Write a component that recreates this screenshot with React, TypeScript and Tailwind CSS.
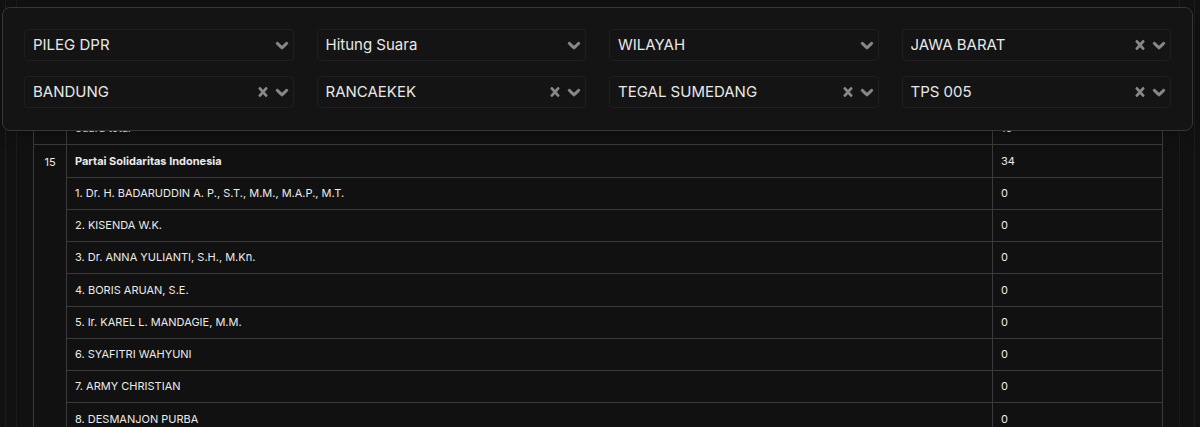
import React from 'react';

type Filter = { label: string; clearable: boolean };

const filters: Filter[] = [
  { label: 'PILEG DPR', clearable: false },
  { label: 'Hitung Suara', clearable: false },
  { label: 'WILAYAH', clearable: false },
  { label: 'JAWA BARAT', clearable: true },
  { label: 'BANDUNG', clearable: true },
  { label: 'RANCAEKEK', clearable: true },
  { label: 'TEGAL SUMEDANG', clearable: true },
  { label: 'TPS 005', clearable: true },
];

const candidates = [
  '1. Dr. H. BADARUDDIN A. P., S.T., M.M., M.A.P., M.T.',
  '2. KISENDA W.K.',
  '3. Dr. ANNA YULIANTI, S.H., M.Kn.',
  '4. BORIS ARUAN, S.E.',
  '5. Ir. KAREL L. MANDAGIE, M.M.',
  '6. SYAFITRI WAHYUNI',
  '7. ARMY CHRISTIAN',
  '8. DESMANJON PURBA',
];

function Chevron() {
  return (
    <svg viewBox="0 0 20 20" className="h-5 w-5 fill-[#8a8a8a] stroke-[#8a8a8a]" strokeWidth={0.9} strokeLinejoin="round">
      <path d="M4.516 7.548c0.436-0.446 1.043-0.481 1.576 0l3.908 3.747 3.908-3.747c0.533-0.481 1.141-0.446 1.574 0 0.436 0.445 0.408 1.197 0 1.615-0.406 0.418-4.695 4.502-4.695 4.502-0.217 0.223-0.502 0.335-0.787 0.335s-0.57-0.112-0.789-0.335c0 0-4.287-4.084-4.695-4.502s-0.436-1.170 0-1.615z" />
    </svg>
  );
}

function Cross() {
  return (
    <svg viewBox="0 0 20 20" className="h-[18px] w-[18px] fill-[#8a8a8a] stroke-[#8a8a8a]" strokeWidth={0.8} strokeLinejoin="round">
      <path d="M14.348 14.849c-0.469 0.469-1.229 0.469-1.697 0l-2.651-3.030-2.651 3.029c-0.469 0.469-1.229 0.469-1.697 0-0.469-0.469-0.469-1.229 0-1.697l2.758-3.150-2.759-3.152c-0.469-0.469-0.469-1.228 0-1.697s1.228-0.469 1.697 0l2.652 3.031 2.651-3.031c0.469-0.469 1.228-0.469 1.697 0s0.469 1.229 0 1.697l-2.758 3.152 2.758 3.150c0.469 0.469 0.469 1.229 0 1.698z" />
    </svg>
  );
}

function SelectBox({ label, clearable }: Filter) {
  return (
    <div className="flex h-8 items-center rounded-[4px] border border-[#1f1f1f] bg-[#141414] pl-2 pr-px">
      <span className="flex-1 truncate text-[15px] text-[#e8e8e8]">{label}</span>
      <div className="flex items-center">
        {clearable && <Cross />}
        <Chevron />
      </div>
    </div>
  );
}

export default function App() {
  return (
    <div
      className="relative h-[427px] w-[1200px] overflow-hidden bg-[#111111]"
      style={{ fontFamily: 'Inter, "Noto Sans", sans-serif' }}
    >
      {/* page content */}
      <div className="h-full pl-[5px] pr-[5px]">
        <div className="h-full border-x border-[#1c1c1c] pl-[10px] pr-[14px]">
          <div className="h-full border-x border-[#1c1c1c] px-4 pt-[112px]">
            <table className="w-full border-collapse text-[11px] text-[#ebebeb]">
              <colgroup>
                <col className="w-[33px]" />
                <col />
                <col className="w-[170px]" />
              </colgroup>
              <tbody>
                <tr className="h-[32.25px]">
                  <td className="border border-[#3a3a3a]"></td>
                  <td className="border border-[#3a3a3a] px-2">Suara total</td>
                  <td className="border border-[#3a3a3a] px-2">10</td>
                </tr>
                <tr className="h-[32.25px]">
                  <td rowSpan={candidates.length + 1} className="border border-[#3a3a3a] text-center align-top pt-[9px]">
                    15
                  </td>
                  <td className="border border-[#3a3a3a] px-2 font-bold">Partai Solidaritas Indonesia</td>
                  <td className="border border-[#3a3a3a] px-2">34</td>
                </tr>
                {candidates.map((c) => (
                  <tr key={c} className="h-[32.25px]">
                    <td className="border border-[#3a3a3a] px-2">{c}</td>
                    <td className="border border-[#3a3a3a] px-2">0</td>
                  </tr>
                ))}
              </tbody>
            </table>
          </div>
        </div>
      </div>

      {/* filter panel over the table */}
      <div className="absolute left-[2px] top-[7px] w-[1191px] rounded-lg border border-[#363636] bg-[#141414] px-[21px] pb-[22px] pt-[21px] shadow-lg">
        <div className="grid grid-cols-4 gap-x-[23px] gap-y-[15px]">
          {filters.map((f) => (
            <SelectBox key={f.label} {...f} />
          ))}
        </div>
      </div>
    </div>
  );
}
